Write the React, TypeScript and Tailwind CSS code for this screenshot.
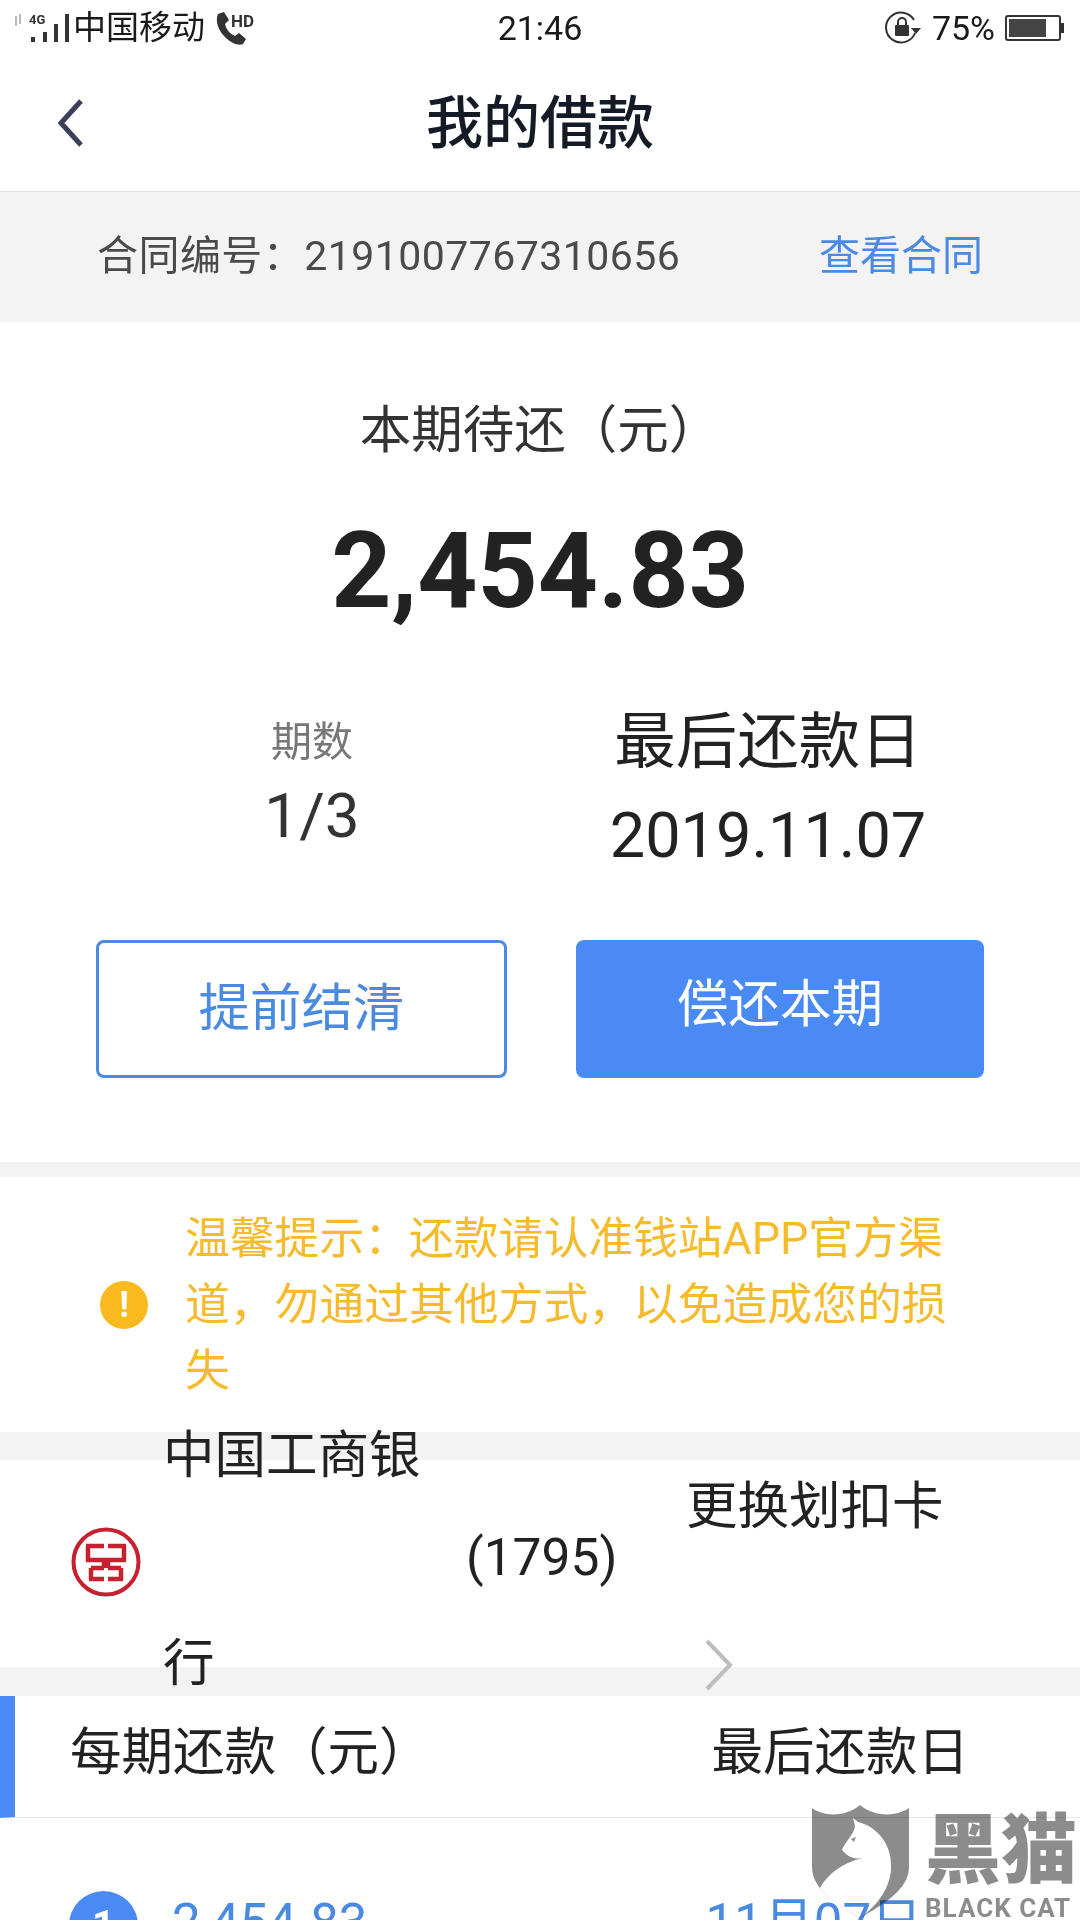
const font = 'font-["Roboto","Noto_Sans_CJK_SC",sans-serif]'

function StatusBar() {
  return (
    <div className="grid h-[55px] grid-cols-3 items-center text-[34px] text-[#1a1a1a]">
      <div className="flex items-center pl-[13px]">
        <svg width="56" height="32" viewBox="0 0 56 32" className="shrink-0">
          <path d="M3 4v10M7 2v10" stroke="#bbb" strokeWidth="2" />
          <text x="16" y="12" fontSize="13" fontWeight="700" fill="#333">4G</text>
          <rect x="18" y="25" width="4" height="5" fill="#333" />
          <rect x="30" y="20" width="4" height="10" fill="#333" />
          <rect x="41" y="12" width="4" height="18" fill="#333" />
          <rect x="52" y="2" width="4" height="28" fill="#333" />
        </svg>
        <span className="ml-[4px] text-[33px] leading-none">中国移动</span>
        <svg width="44" height="34" viewBox="0 0 44 34" className="ml-[10px] shrink-0">
          <path d="M3 3l6-2 5 8-4 4c1 5 5 10 10 12l4-3 7 6-3 5c-4 2-11 0-18-7S0 9 3 3z" fill="#333" />
          <text x="16" y="16" fontSize="17" fontWeight="700" fill="#333">HD</text>
        </svg>
      </div>
      <div className="text-center leading-none">21:46</div>
      <div className="flex items-center justify-end pr-[16px]">
        <svg width="38" height="34" viewBox="0 0 38 34" className="shrink-0">
          <path d="M30 22A15 15 0 1 1 29 9" fill="none" stroke="#333" strokeWidth="2" />
          <rect x="10" y="14" width="14" height="11" rx="1" fill="#333" />
          <path d="M13 14v-3a4 4 0 0 1 8 0v3" fill="none" stroke="#333" strokeWidth="2" />
          <path d="M26 17h10l-5 6z" fill="#333" />
        </svg>
        <span className="ml-[9px] leading-none">75%</span>
        <div className="ml-[10px] flex h-[26px] w-[56px] rounded-[3px] border-2 border-[#333] p-[2px]">
          <div className="h-full w-[37px] bg-[#444]" />
        </div>
        <div className="h-[10px] w-[3px] bg-[#333]" />
      </div>
    </div>
  )
}

function IcbcLogo() {
  return (
    <svg width="70" height="70" viewBox="0 0 70 70" className="mb-[4px] shrink-0">
      <circle cx="35" cy="35" r="32.5" fill="none" stroke="#c7202f" strokeWidth="4" />
      <path
        d="M15 19h18M37 19h18M17 19v15M53 19v15M15 33h40M33 33v8M37 33v8M20 41h13M37 41h13M20 41v12M50 41v12M18 52h15M37 52h15"
        fill="none"
        stroke="#c7202f"
        strokeWidth="4.5"
      />
    </svg>
  )
}

function Watermark() {
  return (
    <div className="absolute left-[812px] top-[1805px] flex opacity-90 mix-blend-multiply">
      <svg width="97" height="113" viewBox="0 0 97 113" className="shrink-0">
        <path
          d="M0 3C12 12 34 12 48 0C62 12 84 12 97 3V62C97 85 70 100 48 113C26 100 0 85 0 62Z"
          fill="#808080"
        />
        <path
          d="M41 13L46 17C66 22 80 40 79 62C79 82 66 100 48 113C32 104 16 94 8 83C14 72 28 58 51 53C44 54 38 54 30 45C32 38 42 30 43 21Z"
          fill="#fff"
        />
        <path d="M39 34l5-2-2 5z" fill="#808080" />
      </svg>
      <div className="ml-[16px] flex flex-col text-[#808080]">
        <span className="mt-[8px] text-[76px] font-black leading-[76px]">黑猫</span>
        <span className="mt-[8px] text-[26px] font-bold leading-[22px] tracking-[1px]">BLACK CAT</span>
      </div>
    </div>
  )
}

export default function App() {
  return (
    <div className={`relative h-[1920px] w-[1080px] overflow-hidden bg-white ${font}`}>
      <StatusBar />

      <div className="relative flex h-[137px] items-center justify-center border-b border-[#e2e2e2]">
        <svg width="30" height="50" viewBox="0 0 30 50" className="absolute left-[56px] top-[43px]">
          <path d="M25 3L5 25l20 22" fill="none" stroke="#3a3f5c" strokeWidth="5" />
        </svg>
        <span className="text-[57px] font-medium leading-none text-[#141a26]">我的借款</span>
      </div>

      <div className="flex h-[130px] items-center justify-between bg-[#f3f3f3] pl-[97px] pr-[97px] text-[41px] text-[#4a4a4a]">
        <span className="tracking-[0.45px]">合同编号：2191007767310656</span>
        <span className="text-[41px] text-[#4a8ae0]">查看合同</span>
      </div>

      <div className="h-[840px] pt-[77px]">
        <div className="text-center text-[51.5px] leading-[64px] text-[#333]">本期待还（元）</div>
        <div className="mt-[47px] text-center text-[105px] font-bold leading-[124px] text-[#222]">2,454.83</div>

        <div className="mt-[78px] flex">
          <div className="ml-[212px] w-[200px] text-center">
            <div className="text-[41px] leading-[60px] text-[#777]">期数</div>
            <div className="mt-[14px] text-[62px] leading-[60px] text-[#333]">1/3</div>
          </div>
          <div className="ml-[196px] w-[320px] text-center text-[#222]">
            <div className="text-[61.5px] leading-[60px]">最后还款日</div>
            <div className="mt-[34px] text-[63px] leading-[60px]">2019.11.07</div>
          </div>
        </div>

        <div className="mt-[74px] flex gap-[69px] pl-[96px]">
          <button className="flex h-[138px] w-[411px] items-center justify-center rounded-[8px] border-[3px] border-[#4a8ae0] text-[51.5px] text-[#4a8ae0]">
            提前结清
          </button>
          <button className="h-[138px] w-[408px] rounded-[8px] bg-[#4a8af4] pb-[8px] text-[51.5px] text-white">
            偿还本期
          </button>
        </div>
      </div>

      <div className="h-[15px] bg-[#f3f3f3]" />

      <div className="flex h-[255px] items-center pl-[100px]">
        <div className="flex h-[48px] w-[48px] shrink-0 items-center justify-center rounded-full bg-[#f9b91f] text-[36px] font-bold leading-none text-white">
          !
        </div>
        <p className="ml-[37px] w-[768px] text-[44.8px] leading-[66px] text-[#f5bb2c]">
          温馨提示：还款请认准钱站APP官方渠道，勿通过其他方式，以免造成您的损失
        </p>
      </div>

      <div className="h-[28px] bg-[#f3f3f3]" />

      <div className="flex h-[207px] items-center pl-[71px] text-[51.5px] text-[#222]">
        <IcbcLogo />
        <div className="ml-[22px] mt-[-8px] w-[258px] leading-[208px]">中国工商银行</div>
        <div className="ml-[45px] mb-[12px] w-[150px] text-center leading-[60px]">(1795)</div>
        <div className="ml-[70px] flex h-full flex-col self-start pt-[17px]">
          <span className="leading-[60px]">更换划扣卡</span>
          <svg width="30" height="52" viewBox="0 0 30 52" className="ml-[18px] mt-[102px] shrink-0">
            <path d="M3 2l23 24L3 50" fill="none" stroke="#bdbdbd" strokeWidth="4" />
          </svg>
        </div>
      </div>

      <div className="h-[29px] bg-[#f3f3f3]" />

      <div className="flex h-[122px] items-center justify-between border-b border-[#e6e6e6] border-l-[15px] border-l-[#4a8af4] pb-[8px] pl-[55px] pr-[111px] text-[51.5px] text-[#222]">
        <span>每期还款（元）</span>
        <span>最后还款日</span>
      </div>

      <div className="flex items-start pl-[69px] pt-[73px] text-[51px] leading-[50px] text-[#4a8ae0]">
        <div className="flex h-[69px] w-[69px] shrink-0 items-center justify-center rounded-full bg-[#4a8af4] text-[40px] font-bold text-white">
          1
        </div>
        <span className="ml-[34px] mt-[7px]">2,454.83</span>
        <span className="ml-[338px] mt-[7px]">11月07日</span>
      </div>

      <Watermark />
    </div>
  )
}
